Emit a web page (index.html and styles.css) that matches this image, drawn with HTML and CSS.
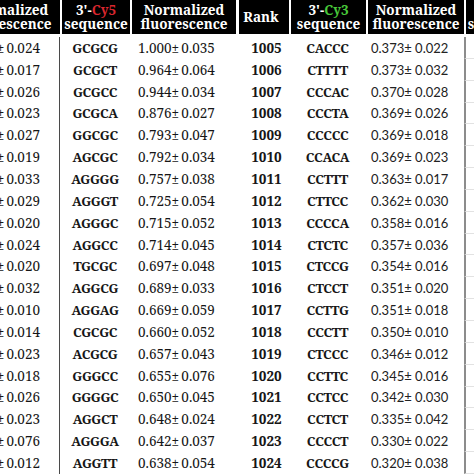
FILE: index.html
```html
<!DOCTYPE html>
<html lang="en">
<head>
<meta charset="utf-8">
<title>Normalized fluorescence ranking</title>
<link rel="stylesheet" href="styles.css">
</head>
<body>
<div class="table">
  <div class="row head">
    <div class="th th-a"><div class="hd clip-a">Normalized<br>fluorescence</div></div>
    <div class="th sep"><div class="hd">3'-<span class="cy5">Cy5</span><br>sequence</div></div>
    <div class="th sep"><div class="hd">Normalized<br>fluorescence</div></div>
    <div class="gap"></div>
    <div class="th th-rank"><div class="hd">Rank</div></div>
    <div class="th sep"><div class="hd">3'-<span class="cy3">Cy3</span><br>sequence</div></div>
    <div class="th sep"><div class="hd">Normalized<br>fluorescence</div></div>
    <div class="th sep th-g"><div class="hd clip-g">3'-Cy5<br>sequence</div></div>
  </div>

  <div class="row"><div class="c a">±&thinsp;0.024</div><div class="c seq">GCGCG</div><div class="c v1">1.000±&thinsp;0.035</div><div class="gap"></div><div class="c rank">1005</div><div class="c seq">CACCC</div><div class="c v2">0.373± 0.022</div><div class="c g"></div></div>
  <div class="row"><div class="c a">±&thinsp;0.017</div><div class="c seq">GCGCT</div><div class="c v1">0.964±&thinsp;0.064</div><div class="gap"></div><div class="c rank">1006</div><div class="c seq">CTTTT</div><div class="c v2">0.373± 0.032</div><div class="c g"></div></div>
  <div class="row"><div class="c a">±&thinsp;0.026</div><div class="c seq">GCGCC</div><div class="c v1">0.944±&thinsp;0.034</div><div class="gap"></div><div class="c rank">1007</div><div class="c seq">CCCAC</div><div class="c v2">0.370± 0.028</div><div class="c g"></div></div>
  <div class="row"><div class="c a">±&thinsp;0.023</div><div class="c seq">GCGCA</div><div class="c v1">0.876±&thinsp;0.027</div><div class="gap"></div><div class="c rank">1008</div><div class="c seq">CCCTA</div><div class="c v2">0.369± 0.026</div><div class="c g"></div></div>
  <div class="row"><div class="c a">±&thinsp;0.027</div><div class="c seq">GGCGC</div><div class="c v1">0.793±&thinsp;0.047</div><div class="gap"></div><div class="c rank">1009</div><div class="c seq">CCCCC</div><div class="c v2">0.369± 0.018</div><div class="c g"></div></div>
  <div class="row"><div class="c a">±&thinsp;0.019</div><div class="c seq">AGCGC</div><div class="c v1">0.792±&thinsp;0.034</div><div class="gap"></div><div class="c rank">1010</div><div class="c seq">CCACA</div><div class="c v2">0.369± 0.023</div><div class="c g"></div></div>
  <div class="row"><div class="c a">±&thinsp;0.033</div><div class="c seq">AGGGG</div><div class="c v1">0.757±&thinsp;0.038</div><div class="gap"></div><div class="c rank">1011</div><div class="c seq">CCTTT</div><div class="c v2">0.363± 0.017</div><div class="c g"></div></div>
  <div class="row"><div class="c a">±&thinsp;0.029</div><div class="c seq">AGGGT</div><div class="c v1">0.725±&thinsp;0.054</div><div class="gap"></div><div class="c rank">1012</div><div class="c seq">CTTCC</div><div class="c v2">0.362± 0.030</div><div class="c g"></div></div>
  <div class="row"><div class="c a">±&thinsp;0.020</div><div class="c seq">AGGGC</div><div class="c v1">0.715±&thinsp;0.052</div><div class="gap"></div><div class="c rank">1013</div><div class="c seq">CCCCA</div><div class="c v2">0.358± 0.016</div><div class="c g"></div></div>
  <div class="row"><div class="c a">±&thinsp;0.024</div><div class="c seq">AGGCC</div><div class="c v1">0.714±&thinsp;0.045</div><div class="gap"></div><div class="c rank">1014</div><div class="c seq">CTCTC</div><div class="c v2">0.357± 0.036</div><div class="c g"></div></div>
  <div class="row"><div class="c a">±&thinsp;0.020</div><div class="c seq">TGCGC</div><div class="c v1">0.697±&thinsp;0.048</div><div class="gap"></div><div class="c rank">1015</div><div class="c seq">CTCCG</div><div class="c v2">0.354± 0.016</div><div class="c g"></div></div>
  <div class="row"><div class="c a">±&thinsp;0.032</div><div class="c seq">AGGCG</div><div class="c v1">0.689±&thinsp;0.033</div><div class="gap"></div><div class="c rank">1016</div><div class="c seq">CTCCT</div><div class="c v2">0.351± 0.020</div><div class="c g"></div></div>
  <div class="row"><div class="c a">±&thinsp;0.010</div><div class="c seq">AGGAG</div><div class="c v1">0.669±&thinsp;0.059</div><div class="gap"></div><div class="c rank">1017</div><div class="c seq">CCTTG</div><div class="c v2">0.351± 0.018</div><div class="c g"></div></div>
  <div class="row"><div class="c a">±&thinsp;0.014</div><div class="c seq">CGCGC</div><div class="c v1">0.660±&thinsp;0.052</div><div class="gap"></div><div class="c rank">1018</div><div class="c seq">CCCTT</div><div class="c v2">0.350± 0.010</div><div class="c g"></div></div>
  <div class="row"><div class="c a">±&thinsp;0.023</div><div class="c seq">ACGCG</div><div class="c v1">0.657±&thinsp;0.043</div><div class="gap"></div><div class="c rank">1019</div><div class="c seq">CTCCC</div><div class="c v2">0.346± 0.012</div><div class="c g"></div></div>
  <div class="row"><div class="c a">±&thinsp;0.018</div><div class="c seq">GGGCC</div><div class="c v1">0.655±&thinsp;0.076</div><div class="gap"></div><div class="c rank">1020</div><div class="c seq">CCTTC</div><div class="c v2">0.345± 0.016</div><div class="c g"></div></div>
  <div class="row"><div class="c a">±&thinsp;0.026</div><div class="c seq">GGGGC</div><div class="c v1">0.650±&thinsp;0.045</div><div class="gap"></div><div class="c rank">1021</div><div class="c seq">CCTCC</div><div class="c v2">0.342± 0.030</div><div class="c g"></div></div>
  <div class="row"><div class="c a">±&thinsp;0.023</div><div class="c seq">AGGCT</div><div class="c v1">0.648±&thinsp;0.024</div><div class="gap"></div><div class="c rank">1022</div><div class="c seq">CCTCT</div><div class="c v2">0.335± 0.042</div><div class="c g"></div></div>
  <div class="row"><div class="c a">±&thinsp;0.076</div><div class="c seq">AGGGA</div><div class="c v1">0.642±&thinsp;0.037</div><div class="gap"></div><div class="c rank">1023</div><div class="c seq">CCCCT</div><div class="c v2">0.330± 0.022</div><div class="c g"></div></div>
  <div class="row"><div class="c a">±&thinsp;0.012</div><div class="c seq">AGGTT</div><div class="c v1">0.638±&thinsp;0.054</div><div class="gap"></div><div class="c rank">1024</div><div class="c seq">CCCCG</div><div class="c v2">0.320± 0.038</div><div class="c g"></div></div>
</div>
</body>
</html>
```
FILE: styles.css
```css
* { box-sizing: border-box; }
html, body { margin: 0; padding: 0; background: #fff; }
body { width: 474px; height: 474px; overflow: hidden; }

.table {
  display: grid;
  grid-template-columns: 60px 70px 106px 3px 50px 77px 98px 10px;
  grid-template-rows: 37px repeat(20, 21.85px);
  width: 474px;
  color: #161616;
  font-family: "Noto Serif", "DejaVu Serif", serif;
}
.row { display: contents; }

.th {
  height: 34px;
  background: #000;
  color: #fff;
  font-weight: bold;
  font-size: 13.5px;
  line-height: 14.5px;
  display: flex;
  flex-direction: column;
  justify-content: center;
  align-items: center;
  white-space: nowrap;
  overflow: hidden;
}
.hd { text-align: center; }
.th.sep { border-left: 2px solid #fff; }
.th-rank { padding-right: 6px; }
.th-a { align-items: flex-end; }
.clip-a { width: 104px; flex-shrink: 0; }
.th-g { align-items: flex-start; }
.clip-g { width: 67px; flex-shrink: 0; }

.cy5 { color: #d8262e; }
.cy3 { color: #48c83a; }

.gap { background: #fff; }

.c {
  display: flex;
  align-items: center;
  white-space: nowrap;
  font-size: 13px;
}
.a {
  justify-content: flex-end;
  padding-right: 19px;
  border-right: 1px solid #4a4a4a;
  font-size: 13.5px;
}
.seq {
  justify-content: center;
  font-weight: bold;
  letter-spacing: -0.4px;
}
.v1 { padding-left: 8px; font-size: 13.5px; }
.rank {
  justify-content: center;
  padding-left: 5px;
  font-weight: bold;
  font-size: 13.5px;
}
.v2 {
  padding-left: 5px;
  font-family: Lato, "Open Sans", sans-serif;
  font-size: 13px;
  color: #222;
}
.g {
  border-left: 2px solid #8c8c8c;
  border-bottom: 1px solid #e2e2e2;
}
```
